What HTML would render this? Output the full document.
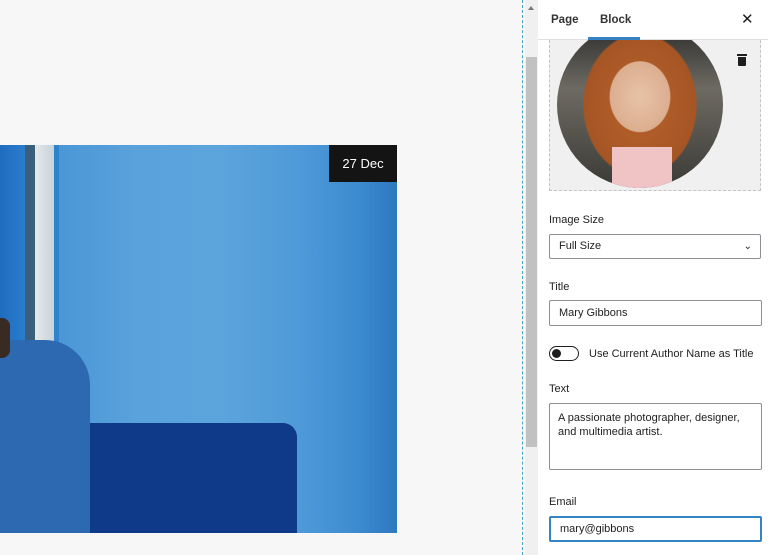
<!DOCTYPE html>
<html><head><style>
*{box-sizing:border-box;margin:0;padding:0}
body{width:768px;height:555px;overflow:hidden;position:relative;background:#f7f7f7;font-family:"Liberation Sans",sans-serif;color:#1e1e1e}
.abs{position:absolute}
.lbl{position:absolute;left:549px;font-size:11px;color:#1e1e1e}
.inp{position:absolute;left:549px;width:213px;border:1px solid #8c8f94;border-radius:2px;background:#fff;font-size:11px;padding-left:9px;color:#1e1e1e}
</style></head><body>
<!-- photo -->
<div class="abs" style="left:0;top:145px;width:397px;height:388px;background:linear-gradient(90deg,#1f6cbf 0,#2a7ccc 6%,#4a96d6 14%,#5aa2dc 35%,#5ca4dc 55%,#4f9ad8 75%,#3d8bd0 90%,#2e78c0 100%)"></div>
<div class="abs" style="left:25px;top:145px;width:10px;height:210px;background:#3b5f7a"></div>
<div class="abs" style="left:35px;top:145px;width:19px;height:220px;background:linear-gradient(90deg,#e4e8ea,#c8d3da)"></div>
<div class="abs" style="left:54px;top:145px;width:5px;height:225px;background:#2f82cc"></div>
<div class="abs" style="left:60px;top:423px;width:237px;height:110px;background:#0f3a8a;border-radius:10px 14px 0 0"></div>
<div class="abs" style="left:0;top:340px;width:90px;height:193px;background:#2d69b0;border-radius:0 45px 0 0"></div>
<div class="abs" style="left:0;top:318px;width:10px;height:40px;background:#3a2a24;border-radius:0 8px 8px 0"></div>
<div class="abs" style="left:329px;top:145px;width:68px;height:37px;background:#141414;color:#fff;font-size:13px;line-height:37px;text-align:center">27 Dec</div>
<!-- dotted separator -->
<div class="abs" style="left:522px;top:0;width:0;height:555px;border-left:1px dashed #4aa3c8"></div>
<!-- scrollbar -->
<div class="abs" style="left:525px;top:0;width:13px;height:555px;background:#f0f0f0"></div>
<div class="abs" style="left:526px;top:57px;width:11px;height:390px;background:#c1c1c1"></div>
<div class="abs" style="left:528px;top:6px;width:0;height:0;border-left:3px solid transparent;border-right:3px solid transparent;border-bottom:4px solid #777"></div>
<!-- sidebar -->
<div class="abs" style="left:538px;top:0;width:230px;height:555px;background:#fff"></div>
<div class="abs" style="left:538px;top:39px;width:230px;height:1px;background:#e0e0e0"></div>
<div class="abs" style="left:551px;top:14px;font-size:11.5px;font-weight:bold;color:#333">Page</div>
<div class="abs" style="left:600px;top:14px;font-size:11.5px;font-weight:bold;color:#333">Block</div>
<div class="abs" style="left:588px;top:37px;width:52px;height:3px;background:#3582c4"></div>
<div class="abs" style="left:741px;top:10px;font-size:15px">✕</div>
<!-- image area -->
<div class="abs" style="left:549px;top:40px;width:212px;height:151px;background:#f0f0f0;border:1px dashed #c4c4c4;border-top:none"></div>
<div class="abs" style="left:557px;top:22px;width:166px;height:166px;border-radius:50%;overflow:hidden;background:radial-gradient(ellipse 30% 35% at 50% 45%,#e8c3a8 0,#dcae90 60%,transparent 62%),radial-gradient(ellipse 48% 60% at 50% 50%,#b8622c 0,#a55524 70%,transparent 72%),linear-gradient(180deg,#2a2a2a 0,#6d6a62 40%,#3c3a36 100%);clip-path:inset(18px 0 0 0)">
<div style="position:absolute;left:55px;top:125px;width:60px;height:50px;background:#f0c3c5"></div>
</div>
<div class="abs" style="left:737px;top:54px;width:10px;height:2px;background:#1e1e1e"></div>
<div class="abs" style="left:738px;top:57px;width:8px;height:9px;background:#1e1e1e;border-radius:0 0 1px 1px"></div>
<!-- form -->
<div class="lbl" style="top:214px">Image Size</div>
<div class="inp" style="top:234px;height:25px;line-height:23px;width:212px">Full Size<span style="position:absolute;right:8px;top:0;font-size:10px">⌄</span></div>
<div class="lbl" style="top:281px">Title</div>
<div class="inp" style="top:300px;height:26px;line-height:24px">Mary Gibbons</div>
<div class="abs" style="left:549px;top:346px;width:30px;height:15px;border:1px solid #1e1e1e;border-radius:8px"></div>
<div class="abs" style="left:552px;top:349px;width:9px;height:9px;border-radius:50%;background:#1e1e1e"></div>
<div class="abs" style="left:589px;top:348px;font-size:11px">Use Current Author Name as Title</div>
<div class="lbl" style="top:383px">Text</div>
<div class="inp" style="top:403px;height:67px;padding:7px 8px;line-height:14px">A passionate photographer, designer, and multimedia artist.</div>
<div class="lbl" style="top:496px">Email</div>
<div class="inp" style="top:516px;height:26px;line-height:22px;border:2px solid #3582c4;width:213px">mary@gibbons</div>
</body></html>
